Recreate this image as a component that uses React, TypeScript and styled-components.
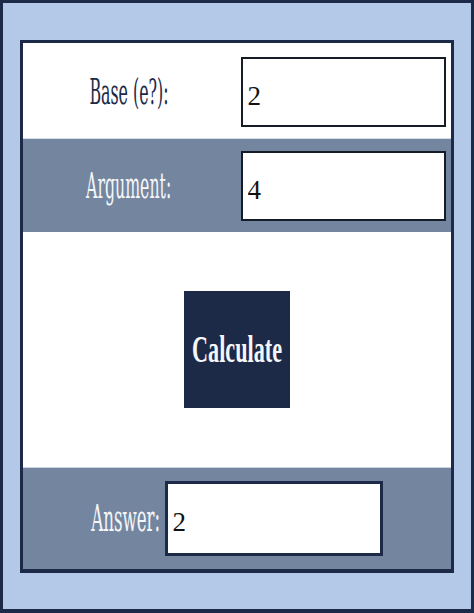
import React from "react";
import styled, { createGlobalStyle } from "styled-components";

const NAVY = "#1c2a48";
const LIGHT = "#b4c9e7";
const GRAY = "#74869f";

const Global = createGlobalStyle`
  html, body { margin: 0; padding: 0; height: 100%; }
  body { font-family: "Liberation Serif", "Times New Roman", serif; }
  #root { height: 100%; }
  * { box-sizing: border-box; }
`;

const Page = styled.div`
  height: 100vh;
  display: flex;
  flex-direction: column;
  background: ${LIGHT};
  border: 3px solid ${NAVY};
  border-bottom-width: 4px;
  padding: 37px 17px 36px;
`;

const Card = styled.div`
  flex: 1;
  display: flex;
  flex-direction: column;
  border: 3px solid ${NAVY};
  border-bottom-width: 4px;
  background: #fff;
  min-width: 0;
`;

const FieldRow = styled.div<{ $shade?: boolean; $pt: number; $pb: number }>`
  display: grid;
  grid-template-columns: minmax(0, 1fr) minmax(0, 1fr);
  align-items: center;
  height: ${(p) => p.$pt + p.$pb + 70 + (p.$shade ? 0 : 1)}px;
  padding: ${(p) => `${p.$pt}px 5px ${p.$pb}px 0`};
  background: ${(p) => (p.$shade ? GRAY : "#fff")};
  border-bottom: ${(p) => (p.$shade ? "none" : "1px solid #d3dcea")};
`;

const LabelBox = styled.div<{ $width?: number }>`
  display: flex;
  justify-content: center;
  align-items: center;
  width: ${(p) => (p.$width ? `${p.$width}px` : "auto")};
  min-width: 0;
  flex: none;
`;

const LabelText = styled.span<{ $light?: boolean; $size: number; $scale: number; $bold?: boolean }>`
  display: inline-block;
  white-space: nowrap;
  font-family: ${(p) =>
    p.$bold ? `"Liberation Serif", "Times New Roman", serif` : `"DejaVu Serif", serif`};
  font-size: ${(p) => p.$size}px;
  font-weight: ${(p) => (p.$bold ? 700 : 400)};
  line-height: 1;
  color: ${(p) => (p.$light ? "#f4f6fa" : NAVY)};
  transform: scaleX(${(p) => p.$scale});
  transform-origin: center;
`;

const Field = styled.input<{ $thick?: boolean; $w?: number; $h?: number }>`
  display: block;
  min-width: 0;
  width: ${(p) => (p.$w ? `${p.$w}px` : "calc(100% - 6px)")};
  height: ${(p) => (p.$h ? `${p.$h}px` : "70px")};
  margin-left: ${(p) => (p.$w ? "0" : "6px")};
  border: ${(p) => (p.$thick ? `3px solid ${NAVY}` : "2px solid #161b28")};
  border-radius: 0;
  background: #fff;
  padding: 8px 5px 0;
  font-family: "Liberation Serif", "Times New Roman", serif;
  font-size: 27px;
  color: #111;
  outline: none;
`;

const ButtonArea = styled.div`
  height: 236px;
  display: flex;
  align-items: center;
  justify-content: center;
  background: #fff;
  border-bottom: 1px solid #c9d3e2;
`;

const CalcButton = styled.button`
  width: 106px;
  height: 117px;
  border: none;
  border-radius: 0;
  background: ${NAVY};
  display: flex;
  align-items: center;
  justify-content: center;
  padding: 0;
  cursor: pointer;
`;

const AnswerRow = styled.div`
  flex: 1;
  display: flex;
  align-items: center;
  justify-content: center;
  gap: 5px;
  background: ${GRAY};
`;

export default function App() {
  return (
    <>
      <Global />
      <Page>
        <Card>
          <FieldRow $pt={14} $pb={11}>
            <LabelBox>
              <LabelText $size={36} $scale={0.44}>Base (e?):</LabelText>
            </LabelBox>
            <Field defaultValue="2" />
          </FieldRow>
          <FieldRow $shade $pt={12} $pb={11}>
            <LabelBox>
              <LabelText $light $size={35} $scale={0.45}>Argument:</LabelText>
            </LabelBox>
            <Field defaultValue="4" />
          </FieldRow>
          <ButtonArea>
            <CalcButton>
              <LabelText $light $bold $size={37} $scale={0.6}>Calculate</LabelText>
            </CalcButton>
          </ButtonArea>
          <AnswerRow>
            <LabelBox $width={68}>
              <LabelText $light $size={37} $scale={0.45}>Answer:</LabelText>
            </LabelBox>
            <Field $thick $w={218} $h={75} defaultValue="2" readOnly />
          </AnswerRow>
        </Card>
      </Page>
    </>
  );
}
